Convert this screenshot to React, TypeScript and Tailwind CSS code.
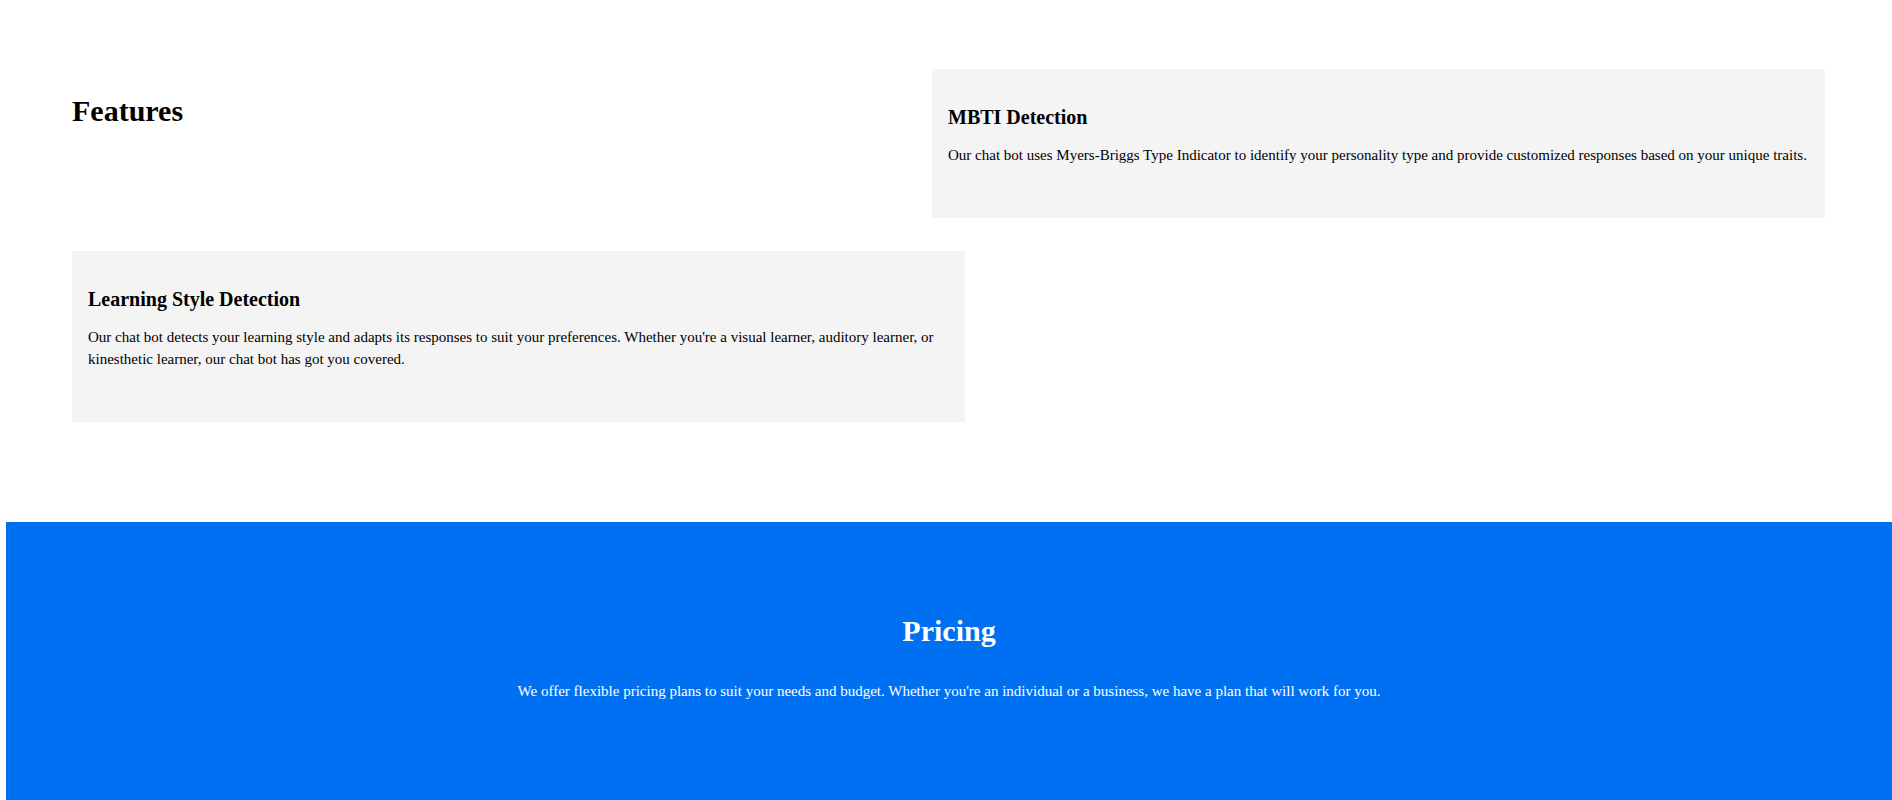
import React from 'react';

type Feature = { title: string; body: string };

const mbti: Feature = {
  title: 'MBTI Detection',
  body: 'Our chat bot uses Myers-Briggs Type Indicator to identify your personality type and provide customized responses based on your unique traits.',
};

const learning: Feature = {
  title: 'Learning Style Detection',
  body: "Our chat bot detects your learning style and adapts its responses to suit your preferences. Whether you're a visual learner, auditory learner, or kinesthetic learner, our chat bot has got you covered.",
};

function FeatureCard({ feature }: { feature: Feature }) {
  return (
    <div className="w-[893px] bg-[#f4f4f4] px-4 pt-4 pb-[51px]">
      <h3 className="mt-[21px] text-[20px] font-bold leading-[23px]">{feature.title}</h3>
      <p className="mt-[15px] text-[15px] leading-[22.5px]">{feature.body}</p>
    </div>
  );
}

export default function App() {
  return (
    <div className="min-h-screen bg-white font-['Liberation_Serif','Times_New_Roman',serif] text-black">
      {/* features */}
      <section className="pl-[72px] pr-[67px] pt-[69px]">
        <div className="flex items-start justify-between">
          <h2 className="mt-[25px] text-[30px] font-bold leading-[34.5px]">Features</h2>
          <FeatureCard feature={mbti} />
        </div>
        <div className="mt-[33px]">
          <FeatureCard feature={learning} />
        </div>
      </section>

      {/* pricing */}
      <section className="ml-[6px] mt-[100px] h-[300px] bg-[#0070f3] pt-[92px] text-center text-white">
        <h2 className="text-[30px] font-bold leading-[34.5px]">Pricing</h2>
        <p className="mt-[35px] text-[15px] leading-[17.25px]">
          We offer flexible pricing plans to suit your needs and budget. Whether you're an individual or a business, we have a plan that will work for you.
        </p>
      </section>
    </div>
  );
}
